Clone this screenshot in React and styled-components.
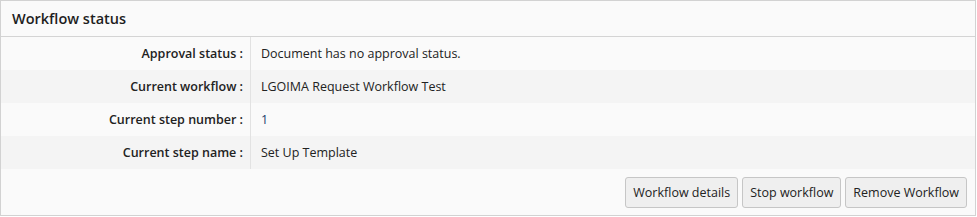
import React from "react";
import styled, { createGlobalStyle } from "styled-components";

const Global = createGlobalStyle`
  html, body { margin: 0; padding: 0; background: #ffffff; }
  body { font-family: "Open Sans", "Noto Sans", sans-serif; color: #222; }
`;

const Panel = styled.section`
  box-sizing: border-box;
  width: 976px;
  height: 216px;
  border: 1px solid #d2d2d2;
  background: #fafafa;
  display: flex;
  flex-direction: column;
`;

const Header = styled.header`
  height: 35px;
  border-bottom: 1px solid #d4d4d4;
  display: flex;
  align-items: center;
  padding: 0 11px;
  font-size: 14.5px;
  font-weight: 600;
  color: #1e1e1e;
`;

const Rows = styled.div`
  display: flex;
  flex-direction: column;
`;

const Row = styled.div`
  display: grid;
  grid-template-columns: 250px 1fr;
  height: 33px;
  background: ${(p) => (p.$alt ? "#f4f4f4" : "#fafafa")};
`;

const Label = styled.div`
  display: flex;
  align-items: center;
  justify-content: flex-end;
  padding-right: 7px;
  border-right: 1px solid #e2e2e2;
  font-size: 12.5px;
  font-weight: 600;
  color: #222;
`;

const Value = styled.div`
  display: flex;
  align-items: center;
  padding-left: 10px;
  font-size: 12.5px;
  color: ${(p) => (p.$link ? "#1a3a6b" : "#222")};
`;

const Footer = styled.div`
  display: flex;
  justify-content: flex-end;
  gap: 4px;
  padding: 8px 8px 0 0;
`;

const Button = styled.button`
  box-sizing: border-box;
  height: 31px;
  padding: 0 7px;
  border: 1px solid #c6c6c6;
  border-radius: 3px;
  background: #efefef;
  font-family: "Open Sans", "Noto Sans", sans-serif;
  font-size: 12.5px;
  color: #222;
  cursor: pointer;
`;

const rows = [
  ["Approval status :", "Document has no approval status."],
  ["Current workflow :", "LGOIMA Request Workflow Test"],
  ["Current step number :", "1", true],
  ["Current step name :", "Set Up Template"],
];

export default function App() {
  return (
    <>
      <Global />
      <Panel>
        <Header>Workflow status</Header>
        <Rows>
          {rows.map(([l, v, link], i) => (
            <Row key={l} $alt={i % 2 === 1}>
              <Label>{l}</Label>
              <Value $link={link}>{v}</Value>
            </Row>
          ))}
        </Rows>
        <Footer>
          <Button>Workflow details</Button>
          <Button>Stop workflow</Button>
          <Button>Remove Workflow</Button>
        </Footer>
      </Panel>
    </>
  );
}
